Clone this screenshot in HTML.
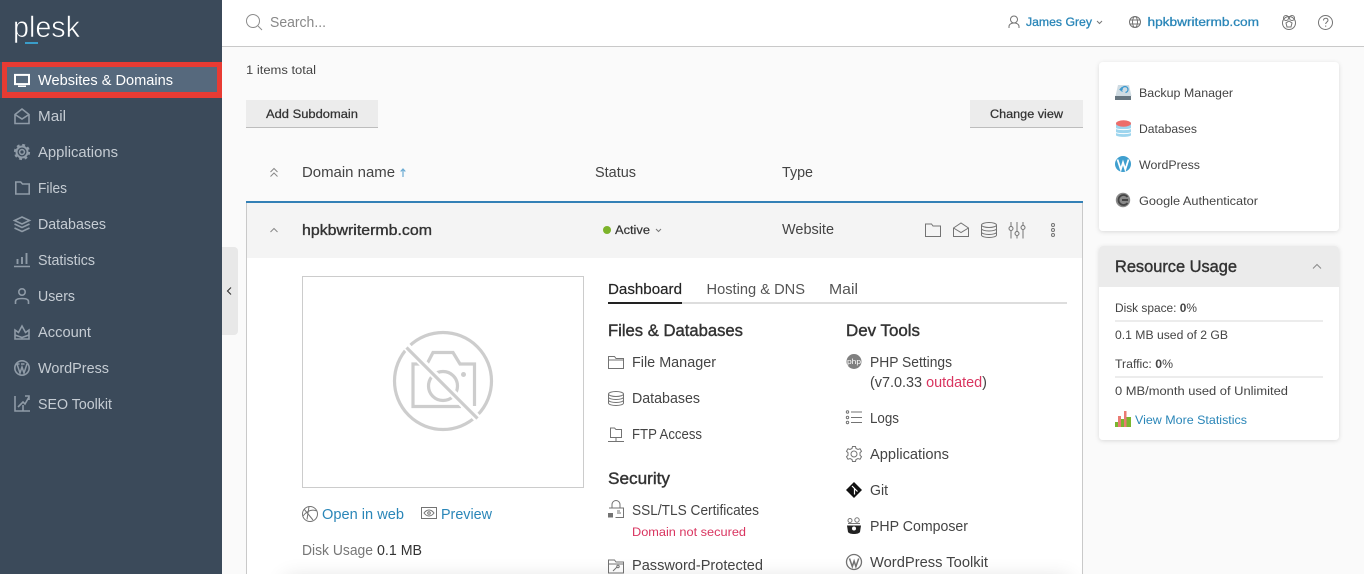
<!DOCTYPE html>
<html lang="en"><head><meta charset="utf-8"><title>Plesk - Websites &amp; Domains</title>
<style>
html,body{margin:0;padding:0;width:1364px;height:574px;overflow:hidden;background:#fafafa}
svg{display:block}
text{font-family:"Liberation Sans",sans-serif;font-size:14.3px;fill:#444}
.nav{fill:#c5ccd3}
.s12{font-size:12.2px}
.semi{stroke:#333;stroke-width:.35px}
.blue{fill:#2a86b8}
.bs{fill:#2a86b8;stroke:#2a86b8;stroke-width:.3px}
.h{font-size:16.3px;fill:#333;stroke:#333;stroke-width:.4px}
.i{fill:none;stroke:#737373;stroke-width:1}
.n{fill:none;stroke:#8f9ba7;stroke-width:1.6}
</style></head><body>
<svg width="1364" height="574" viewBox="0 0 1364 574" xmlns="http://www.w3.org/2000/svg">
<defs>
<filter id="sh" x="-10%" y="-10%" width="120%" height="130%"><feDropShadow dx="0" dy="1" stdDeviation="2" flood-color="#000" flood-opacity=".13"/></filter>
<filter id="bl" x="-10%" y="-300%" width="120%" height="700%"><feGaussianBlur stdDeviation="11"/></filter>
<clipPath id="cardhead"><rect x="1099" y="246" width="240" height="41"/></clipPath>
</defs>
<rect width="1364" height="574" fill="#fafafa"/>

<!-- header -->
<rect x="222" y="0" width="1142" height="46" fill="#fff"/>
<rect x="222" y="46" width="1142" height="1" fill="#c9c9c9"/>
<g fill="none" stroke="#8c8c8c" stroke-width="1"><circle cx="253" cy="21" r="6.500"/><path d="M258 26l4 4"/></g>
<text x="270" y="27" style="fill:#888" textLength="56" lengthAdjust="spacingAndGlyphs">Search...</text>
<g class="i"><circle cx="1014" cy="19.500" r="3.500"/><path d="M1009 28v-1.500c0-2 2-3.500 5-3.500s5 1.500 5 3.500V28"/></g>
<text x="1026" y="26" class="bs s12" textLength="66" lengthAdjust="spacingAndGlyphs">James Grey</text>
<path d="M1097 21l2.500 2.500 2.500-2.500" fill="none" stroke="#777"/>
<g class="i"><circle cx="1135" cy="22" r="5.500"/><ellipse cx="1135" cy="22" rx="2.500" ry="5.500"/><path d="M1129.500 20h11M1129.500 24h11"/></g>
<text x="1147.500" y="26" class="bs s12" textLength="111.500" lengthAdjust="spacingAndGlyphs">hpkbwritermb.com</text>
<g class="i"><circle cx="1289" cy="23" r="6.500"/><circle cx="1286" cy="18" r="2.500"/><circle cx="1292" cy="18" r="2.500"/><path d="M1289 21l3 2-1 4h-4l-1-4z"/></g>
<g class="i"><circle cx="1325.500" cy="22.500" r="7"/><path d="M1323.500 20.500c0-3 4.500-3 4.500-.3 0 1.800-2.300 1.800-2.300 3.800M1325.700 25.500v1.200"/></g>

<!-- sidebar -->
<rect x="0" y="0" width="222" height="574" fill="#3b4a5a"/>
<text x="13" y="37" style="font-size:30px;fill:#fff;stroke:#3b4a5a;stroke-width:.6px" textLength="67" lengthAdjust="spacingAndGlyphs">plesk</text>
<rect x="25" y="42" width="13" height="2" fill="#3a9dc9"/>

<rect x="0" y="62" width="2" height="36" fill="#45566a"/>
<rect x="2" y="62" width="220" height="36" fill="#e83b33"/>
<rect x="7" y="67" width="210" height="25" fill="#56697d"/>
<rect x="15" y="74.900" width="14" height="9.200" fill="none" stroke="#fff" stroke-width="2"/>
<rect x="18" y="85.500" width="8" height="1.500" fill="#fff"/>
<text x="38" y="85" class="nav" style="fill:#fff" textLength="135" lengthAdjust="spacingAndGlyphs">Websites &amp; Domains</text>

<path class="n" d="M15 114.500l7-5.500 7 5.500v9H15zM15 114.500l7 4.500 7-4.500"/>
<text x="38" y="121" class="nav" textLength="28" lengthAdjust="spacingAndGlyphs">Mail</text>
<circle class="n" cx="22" cy="152" r="2.400"/><circle cx="22" cy="152" r="5.500" fill="none" stroke="#8f9ba7" stroke-width="2"/><circle cx="22" cy="152" r="7" fill="none" stroke="#8f9ba7" stroke-width="2.200" stroke-dasharray="2.800 2.700"/>
<text x="38" y="157" class="nav" textLength="80" lengthAdjust="spacingAndGlyphs">Applications</text>
<path class="n" d="M15.800 182v12h13.400v-10h-6.700l-1.800-2z"/>
<text x="38" y="193" class="nav" textLength="29" lengthAdjust="spacingAndGlyphs">Files</text>
<path class="n" d="M22 217l7.500 3.500-7.500 3.500-7.500-3.500zM14.500 224l7.500 3.500 7.500-3.500M14.500 228l7.500 3.500 7.500-3.500"/>
<text x="38" y="229" class="nav" textLength="68" lengthAdjust="spacingAndGlyphs">Databases</text>
<path d="M14 266.500h16" stroke="#8f9ba7" stroke-width="1.500"/><path d="M17.500 264v-5M22 264v-7M26.500 264v-11" stroke="#8f9ba7" stroke-width="1.900"/>
<text x="38" y="265" class="nav" textLength="57" lengthAdjust="spacingAndGlyphs">Statistics</text>
<circle class="n" cx="22" cy="292" r="3.200"/><path class="n" d="M15.500 304v-2.500c0-2 2.500-3 6.500-3s6.500 1 6.500 3v2.500"/>
<text x="38" y="301" class="nav" textLength="37" lengthAdjust="spacingAndGlyphs">Users</text>
<path class="n" d="M15 330l3.500 2.500L22 326l3.500 6.500 3.500-2.500v9H15zM15 335l7 2.500 7-2.500"/>
<text x="38" y="337" class="nav" textLength="53" lengthAdjust="spacingAndGlyphs">Account</text>
<circle class="n" cx="22" cy="368" r="7.200"/><path d="M17 364l3 9 2-6 2 6 3-9M16 364h3.500M21 364h3.500" fill="none" stroke="#8f9ba7" stroke-width="1.500"/>
<text x="38" y="373" class="nav" textLength="71" lengthAdjust="spacingAndGlyphs">WordPress</text>
<path class="n" d="M15 396v15h15M18 407l5-5 2 2 4-7M25 396h4v4M23 411v-6"/>
<text x="38" y="409" class="nav" textLength="74" lengthAdjust="spacingAndGlyphs">SEO Toolkit</text>

<!-- collapse tab -->
<path d="M222 247h12a4 4 0 0 1 4 4v80a4 4 0 0 1-4 4h-12z" fill="#e8e8e8"/>
<path d="M231 287.500l-3.500 3.500 3.500 3.500" fill="none" stroke="#333" stroke-width="1.100"/>

<!-- toolbar -->
<text x="246" y="74" class="s12" textLength="70" lengthAdjust="spacingAndGlyphs">1 items total</text>
<rect x="246" y="100" width="132" height="28" fill="#ececec"/><rect x="246" y="127" width="132" height="1" fill="#bdbdbd"/>
<text x="266" y="118" class="s12 semi" style="fill:#333;stroke-width:.25px" textLength="92" lengthAdjust="spacingAndGlyphs">Add Subdomain</text>
<rect x="970" y="100" width="113" height="28" fill="#ececec"/><rect x="970" y="127" width="113" height="1" fill="#bdbdbd"/>
<text x="990" y="118" class="s12 semi" style="fill:#333;stroke-width:.25px" textLength="73" lengthAdjust="spacingAndGlyphs">Change view</text>

<!-- table head -->
<path d="M270.500 172l3.500-3.500 3.500 3.500M270.500 176.500l3.500-3.500 3.500 3.500" fill="none" stroke="#888"/>
<text x="302" y="177" textLength="93" lengthAdjust="spacingAndGlyphs">Domain name</text>
<path d="M403 177v-8M400.700 171.500l2.300-2.500 2.300 2.500" fill="none" stroke="#6aaad2" stroke-width="1.200"/>
<text x="595" y="177" textLength="41" lengthAdjust="spacingAndGlyphs">Status</text>
<text x="782" y="177" textLength="31" lengthAdjust="spacingAndGlyphs">Type</text>

<!-- main row -->
<rect x="246.500" y="203" width="836" height="380" fill="#fff" stroke="#c9c9c9"/>
<rect x="247" y="203" width="835" height="55" fill="#f4f4f4"/>
<rect x="246" y="201" width="837" height="2" fill="#3380b6"/>
<path d="M270.500 232l3.500-3.500 3.500 3.500" fill="none" stroke="#888"/>
<text x="302" y="235" class="semi" style="fill:#333" textLength="130" lengthAdjust="spacingAndGlyphs">hpkbwritermb.com</text>
<circle cx="607" cy="230" r="4" fill="#7cb32a"/>
<text x="615" y="234" class="s12 semi" style="fill:#333;stroke-width:.2px" textLength="35" lengthAdjust="spacingAndGlyphs">Active</text>
<path d="M656 229l2.500 2.500 2.500-2.500" fill="none" stroke="#777"/>
<text x="782" y="234" textLength="52" lengthAdjust="spacingAndGlyphs">Website</text>
<g class="i">
<path d="M925.500 236.500v-12.500h6l1.500 2h7.500v10.500z"/>
<path d="M953.500 228l7.500-5 7.500 5v8.500h-15zM953.500 228l7.500 4.500 7.500-4.500"/>
<ellipse cx="989" cy="225" rx="7.500" ry="2.500"/><path d="M981.500 225v10c0 1.500 3.500 2.500 7.500 2.500s7.500-1 7.500-2.500v-10M981.500 228.500c0 1.500 3.500 2.500 7.500 2.500s7.500-1 7.500-2.500M981.500 232c0 1.500 3.500 2.500 7.500 2.500s7.500-1 7.500-2.500"/>
<path d="M1011 222v4M1011 231v7.500M1017 222v9M1017 236v2.500M1023 222v3M1023 230v8.500"/><circle cx="1011" cy="228.500" r="2"/><circle cx="1017" cy="233.500" r="2"/><circle cx="1023" cy="227.500" r="2"/>
<circle cx="1053" cy="225" r="1.500"/><circle cx="1053" cy="230" r="1.500"/><circle cx="1053" cy="235" r="1.500"/>
</g>

<!-- screenshot box -->
<rect x="302.500" y="276.500" width="281" height="211" fill="#fff" stroke="#ccc"/>
<g fill="none" stroke="#cdcdcd" stroke-width="3.200">
<circle cx="443" cy="381" r="48.500"/>
<path d="M420 364h-7v42.500h48M427 364l6-11.500h20l7 11.500h14.500v42"/>
<circle cx="443" cy="386" r="14.500"/>
<path d="M400 340l84 85" stroke="#fff" stroke-width="8"/>
<path d="M406.500 347.500l71 71"/>
</g>
<circle cx="463.500" cy="374.500" r="2.500" fill="#cdcdcd"/>

<g class="i" stroke="#666"><circle cx="310" cy="514" r="7.500"/><path d="M304 509l9 11M303 516c4-5 9-7 14-5M309 506.500l-2 13"/></g>
<text x="322" y="519" class="blue" textLength="82" lengthAdjust="spacingAndGlyphs">Open in web</text>
<g class="i" stroke="#666"><rect x="421.500" y="507.500" width="15" height="11"/><path d="M424 513c3-4 7-4 10 0-3 4-7 4-10 0z"/><circle cx="429" cy="513" r="1.300"/></g>
<text x="441" y="519" class="blue" textLength="51" lengthAdjust="spacingAndGlyphs">Preview</text>
<text x="302" y="555" style="fill:#777" textLength="71" lengthAdjust="spacingAndGlyphs">Disk Usage</text>
<text x="377" y="555" style="fill:#333" textLength="45" lengthAdjust="spacingAndGlyphs">0.1 MB</text>

<!-- tabs -->
<rect x="608" y="302" width="459" height="2" fill="#ddd"/>
<rect x="608" y="302" width="74" height="2" fill="#222"/>
<text x="608" y="294" class="semi" style="fill:#222;stroke-width:.2px" textLength="74" lengthAdjust="spacingAndGlyphs">Dashboard</text>
<text x="706.500" y="294" style="fill:#555" textLength="98.500" lengthAdjust="spacingAndGlyphs">Hosting &amp; DNS</text>
<text x="829" y="294" style="fill:#555" textLength="29" lengthAdjust="spacingAndGlyphs">Mail</text>

<!-- col 1 -->
<text x="608" y="336" class="h" textLength="135" lengthAdjust="spacingAndGlyphs">Files &amp; Databases</text>
<path class="i" d="M608.500 368.500v-12h6l1.500 2h7.500v10z"/><path class="i" d="M608.500 360h15"/>
<text x="632" y="367" textLength="84" lengthAdjust="spacingAndGlyphs">File Manager</text>
<g class="i"><ellipse cx="616" cy="394" rx="7.500" ry="2.500"/><path d="M608.500 394v9c0 1.500 3.500 2.500 7.500 2.500s7.500-1 7.500-2.500v-9M608.500 397c0 1.500 3.500 2.500 7.500 2.500s7.500-1 7.500-2.500M608.500 400c0 1.500 3.500 2.500 7.500 2.500s7.500-1 7.500-2.500"/></g>
<text x="632" y="403" textLength="68" lengthAdjust="spacingAndGlyphs">Databases</text>
<g class="i"><path d="M610.500 437.500v-9.500h4l1.500 1.500h5.500v8zM616 437.500v4M608 441.500h16"/></g>
<text x="632" y="439" textLength="70" lengthAdjust="spacingAndGlyphs">FTP Access</text>
<text x="608" y="484" class="h" textLength="62" lengthAdjust="spacingAndGlyphs">Security</text>
<g class="i"><path d="M612 508v-3.500a4 4 0 0 1 8 0v3.500M609 508h14.500v9.500h-8"/><path d="M617 513h4M617 511h3"/></g><rect x="608" y="513" width="5" height="4.500" fill="#737373"/>
<text x="632" y="515" textLength="127" lengthAdjust="spacingAndGlyphs">SSL/TLS Certificates</text>
<text x="632" y="536" class="s12" style="fill:#d9345f" textLength="114" lengthAdjust="spacingAndGlyphs">Domain not secured</text>
<g class="i"><path d="M608.500 573v-13h6l1.500 2h7.500v11zM608.500 564h15M613 571l4-4"/><circle cx="618" cy="566.500" r="1.200"/></g>
<text x="632" y="570" textLength="131" lengthAdjust="spacingAndGlyphs">Password-Protected</text>

<!-- col 2 -->
<text x="846" y="336" class="h" textLength="74" lengthAdjust="spacingAndGlyphs">Dev Tools</text>
<circle cx="854" cy="361.500" r="7.500" fill="#808080"/>
<text x="847" y="364" style="font-size:7px;fill:#fff" textLength="14" lengthAdjust="spacingAndGlyphs">php</text>
<text x="870" y="367" textLength="82" lengthAdjust="spacingAndGlyphs">PHP Settings</text>
<text x="870" y="387" textLength="117" lengthAdjust="spacingAndGlyphs">(v7.0.33 <tspan style="fill:#d9345f">outdated</tspan>)</text>
<g class="i"><circle cx="847.500" cy="412" r="1.200"/><circle cx="847.500" cy="417.500" r="1.200"/><circle cx="847.500" cy="422.500" r="1.200"/><path d="M851 412h11M851 417.500h11M851 422.500h11"/></g>
<text x="870" y="423" textLength="29" lengthAdjust="spacingAndGlyphs">Logs</text>
<g class="i"><circle cx="854" cy="454" r="3"/><path d="M852.500 446.500h3l.5 2 2 1 2-.8 1.500 2.600-1.500 1.400v2.600l1.500 1.400-1.500 2.600-2-.8-2 1-.5 2h-3l-.5-2-2-1-2 .8-1.500-2.600 1.500-1.400v-2.600l-1.500-1.400 1.500-2.600 2 .8 2-1z"/></g>
<text x="870" y="459" textLength="79" lengthAdjust="spacingAndGlyphs">Applications</text>
<path d="M854 482l8 8-8 8-8-8z" fill="#111"/><path d="M852 486l2.500 2.500v6M854.500 488.500l3 3" stroke="#fff" stroke-width="1.200" fill="none"/>
<text x="870" y="495" textLength="18" lengthAdjust="spacingAndGlyphs">Git</text>
<path d="M847 525.500h14l-1 6.500c-1 1.500-3.500 2-6 2s-5-.5-6-2z" fill="#222"/><circle cx="854" cy="528.500" r="2" fill="#fff"/>
<g fill="none" stroke="#777"><circle cx="850" cy="520.500" r="2"/><circle cx="857" cy="520" r="2.200"/><path d="M848 523.500h12"/></g>
<text x="870" y="531" textLength="98" lengthAdjust="spacingAndGlyphs">PHP Composer</text>
<circle cx="854" cy="562" r="7.500" fill="none" stroke="#737373" stroke-width="1.300"/><path d="M849.500 558.500l2.800 8 1.800-5.500 1.800 5.500 2.800-8" fill="none" stroke="#737373" stroke-width="1.500"/>
<text x="870" y="567" textLength="118" lengthAdjust="spacingAndGlyphs">WordPress Toolkit</text>

<!-- bottom fade -->
<rect x="285" y="578" width="785" height="20" fill="#000" opacity=".13" filter="url(#bl)"/>

<!-- card 1 -->
<rect x="1099" y="62" width="240" height="169" rx="4" fill="#fff" filter="url(#sh)"/>
<path d="M1118 85h11l2.500 11h-16z" fill="#cfdbe2"/><rect x="1115" y="96" width="16" height="4" fill="#66757f"/><path d="M1125.500 92.500a3 3 0 1 0-3.500-3h-1.500" fill="none" stroke="#3c9ad0" stroke-width="1.300"/><path d="M1122.500 87l-2.500 2.500 2.500 2" fill="none" stroke="#3c9ad0" stroke-width="1.100"/>
<text x="1139" y="97" class="s12" textLength="94" lengthAdjust="spacingAndGlyphs">Backup Manager</text>
<path d="M1116 123c0-2 15-2 15 0v12c0 2.500-15 2.500-15 0z" fill="#9dd5ee"/><ellipse cx="1123.500" cy="123.500" rx="7.500" ry="3.200" fill="#ed6d6a"/><path d="M1116 128.500c2 1.500 13 1.500 15 0M1116 132.500c2 1.500 13 1.500 15 0" stroke="#fff" fill="none"/>
<text x="1139" y="133" class="s12" textLength="58" lengthAdjust="spacingAndGlyphs">Databases</text>
<circle cx="1123" cy="164" r="8" fill="#3f9fcf"/><path d="M1117.500 159.500l3.300 10 2.200-7 2.300 7 3.200-10" fill="none" stroke="#fff" stroke-width="1.800"/>
<text x="1139" y="169" class="s12" textLength="61" lengthAdjust="spacingAndGlyphs">WordPress</text>
<circle cx="1123" cy="200" r="7.200" fill="#8a8a8a"/><path d="M1127.500 197a5 5 0 1 0 0 6" fill="none" stroke="#444" stroke-width="1.800"/><path d="M1122 200h6" stroke="#333" stroke-width="1.600"/>
<text x="1139" y="205" class="s12" textLength="119" lengthAdjust="spacingAndGlyphs">Google Authenticator</text>

<!-- card 2 -->
<rect x="1099" y="246" width="240" height="194" rx="4" fill="#fff" filter="url(#sh)"/>
<rect x="1099" y="246" width="240" height="45" rx="4" fill="#ebebeb" clip-path="url(#cardhead)"/>
<text x="1115" y="272" class="h" textLength="122" lengthAdjust="spacingAndGlyphs">Resource Usage</text>
<path d="M1313 268.500l4-4 4 4" fill="none" stroke="#8a8a8a"/>
<text x="1115" y="312" class="s12" textLength="82" lengthAdjust="spacingAndGlyphs">Disk space: <tspan style="font-weight:bold">0</tspan>%</text>
<rect x="1115" y="320" width="208" height="2" fill="#ececec"/>
<text x="1115" y="339" class="s12" textLength="113" lengthAdjust="spacingAndGlyphs">0.1 MB used of 2 GB</text>
<text x="1115" y="368" class="s12" textLength="58" lengthAdjust="spacingAndGlyphs">Traffic: <tspan style="font-weight:bold">0</tspan>%</text>
<rect x="1115" y="376" width="208" height="2" fill="#ececec"/>
<text x="1115" y="395" class="s12" textLength="173" lengthAdjust="spacingAndGlyphs">0 MB/month used of Unlimited</text>
<rect x="1115" y="422" width="3" height="5" fill="#7ab52e"/><rect x="1118" y="416" width="3" height="11" fill="#ea7b73"/><rect x="1121" y="419" width="3" height="8" fill="#7ab52e"/><rect x="1124" y="411" width="2.500" height="16" fill="#ea7b73"/><rect x="1126.500" y="417" width="4.500" height="10" fill="#7ab52e"/>
<text x="1135" y="424" class="s12 blue" textLength="112" lengthAdjust="spacingAndGlyphs">View More Statistics</text>
</svg>
</body></html>
